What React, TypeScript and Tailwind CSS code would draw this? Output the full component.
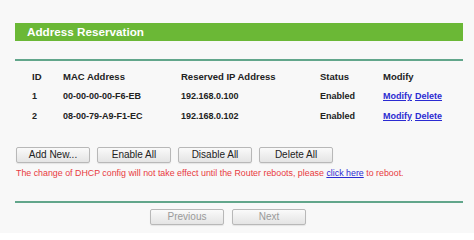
import React from "react";

const rows = [
  { id: "1", mac: "00-00-00-00-F6-EB", ip: "192.168.0.100", status: "Enabled" },
  { id: "2", mac: "08-00-79-A9-F1-EC", ip: "192.168.0.102", status: "Enabled" },
];

function Btn({ label, disabled }: { label: string; disabled?: boolean }) {
  return (
    <button
      className={
        "w-[74px] h-[16px] flex items-center justify-center text-[10px] leading-none border border-[#b8b8b8] rounded-[2px] bg-gradient-to-b from-[#fafafa] to-[#e4e4e4] shadow-[0_1px_1px_rgba(0,0,0,0.08)] " +
        (disabled ? "text-[#9a9a9a]" : "text-[#222]")
      }
    >
      {label}
    </button>
  );
}

export default function App() {
  return (
    <div className="w-[474px] h-[233px] bg-[#f8f8f8] font-['Liberation_Sans',Arial,sans-serif] pt-[23px] pl-[15px] overflow-hidden">
      <div className="w-[448px]">
        <div className="h-[18px] bg-[#6bb836] text-white font-bold text-[11.7px] pl-[12px] flex items-center">
          Address Reservation
        </div>
        <div className="mt-[18px] h-[2px] bg-[#62a68b]" />
        <div className="mt-[6.5px] pl-[17px] text-[#222] font-bold">
          <div className="grid grid-cols-[31px_118px_139px_63px_1fr] h-[19.5px] items-center text-[9.5px]">
            <div>ID</div>
            <div>MAC Address</div>
            <div>Reserved IP Address</div>
            <div>Status</div>
            <div>Modify</div>
          </div>
          {rows.map((r) => (
            <div
              key={r.id}
              className="grid grid-cols-[31px_118px_139px_63px_1fr] h-[19.5px] items-center text-[9px]"
            >
              <div>{r.id}</div>
              <div>{r.mac}</div>
              <div>{r.ip}</div>
              <div>{r.status}</div>
              <div className="flex gap-[3px] text-[#2b2bd2]">
                <span className="underline">Modify</span>
                <span className="underline">Delete</span>
              </div>
            </div>
          ))}
        </div>
        <div className="mt-[21px] pl-[1px] flex gap-[7px]">
          <Btn label="Add New..." />
          <Btn label="Enable All" />
          <Btn label="Disable All" />
          <Btn label="Delete All" />
        </div>
        <div className="mt-[5px] pl-[1px] text-[8.85px] leading-[11px] text-[#e83a3f] whitespace-nowrap">
          The change of DHCP config will not take effect until the Router reboots, please{" "}
          <span className="text-[#2b2bd2] underline">click here</span> to reboot.
        </div>
        <div className="mt-[22px] h-[2px] bg-[#62a68b]" />
        <div className="mt-[6px] pl-[135px] flex gap-[8px]">
          <Btn label="Previous" disabled />
          <Btn label="Next" disabled />
        </div>
      </div>
    </div>
  );
}
